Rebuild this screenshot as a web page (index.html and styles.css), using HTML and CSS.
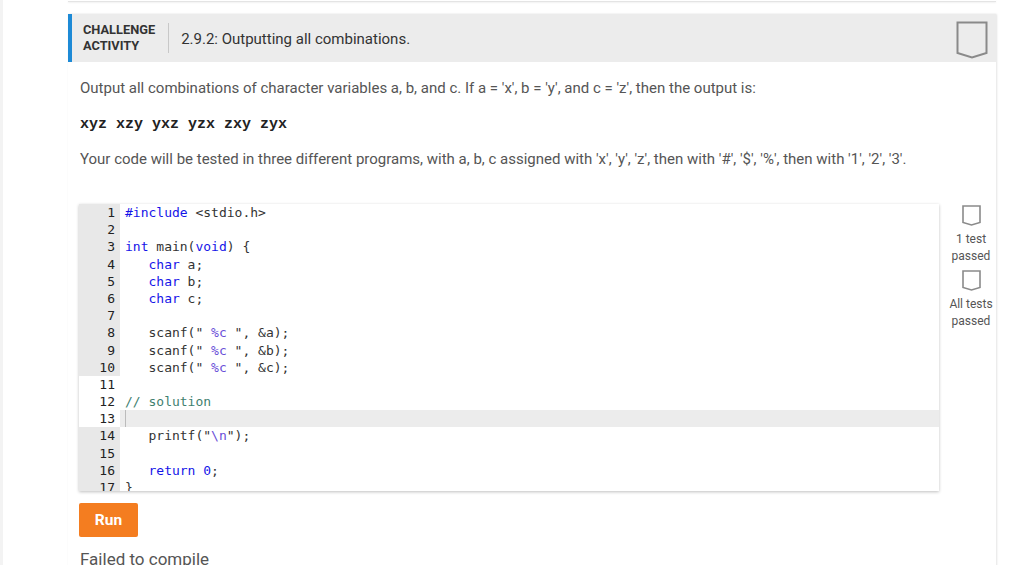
FILE: index.html
```html
<!DOCTYPE html>
<html>
<head>
<meta charset="utf-8">
<link rel="stylesheet" href="styles.css">
</head>
<body>
<div class="page">
  <div class="prev-card"></div>
  <div class="card">
    <div class="card-header">
      <div class="label">CHALLENGE<br>ACTIVITY</div>
      <div class="divider"></div>
      <div class="title">2.9.2: Outputting all combinations.</div>
      <svg class="badge" width="32" height="38" viewBox="0 0 32 38"><path d="M1.5 1.5 H30.5 V32 L16 36.5 L1.5 32 Z" fill="none" stroke="#8a8a8a" stroke-width="2"/></svg>
    </div>
    <div class="card-body">
      <p class="text">Output all combinations of character variables a, b, and c. If a = 'x', b = 'y', and c = 'z', then the output is:</p>
      <p class="mono">xyz xzy yxz yzx zxy zyx</p>
      <p class="text">Your code will be tested in three different programs, with a, b, c assigned with 'x', 'y', 'z', then with '#', '$', '%', then with '1', '2', '3'.</p>
      <div class="work">
        <div class="editor">
          <div class="line"><span class="gut">1</span><span class="code"><span class="kw">#include</span> &lt;stdio.h&gt;</span></div>
          <div class="line"><span class="gut">2</span><span class="code"></span></div>
          <div class="line"><span class="gut">3</span><span class="code"><span class="kw">int</span> main(<span class="kw">void</span>) {</span></div>
          <div class="line"><span class="gut">4</span><span class="code">   <span class="kw">char</span> a;</span></div>
          <div class="line"><span class="gut">5</span><span class="code">   <span class="kw">char</span> b;</span></div>
          <div class="line"><span class="gut">6</span><span class="code">   <span class="kw">char</span> c;</span></div>
          <div class="line"><span class="gut">7</span><span class="code"></span></div>
          <div class="line"><span class="gut">8</span><span class="code">   scanf(" <span class="esc">%c</span> ", &amp;a);</span></div>
          <div class="line"><span class="gut">9</span><span class="code">   scanf(" <span class="esc">%c</span> ", &amp;b);</span></div>
          <div class="line"><span class="gut">10</span><span class="code">   scanf(" <span class="esc">%c</span> ", &amp;c);</span></div>
          <div class="line"><span class="gut white">11</span><span class="code"></span></div>
          <div class="line"><span class="gut white">12</span><span class="code"><span class="cm">// solution</span></span></div>
          <div class="line active"><span class="gut white">13</span><span class="code"><span class="cursor"></span></span></div>
          <div class="line"><span class="gut">14</span><span class="code">   printf("<span class="esc">\n</span>");</span></div>
          <div class="line"><span class="gut">15</span><span class="code"></span></div>
          <div class="line"><span class="gut">16</span><span class="code">   <span class="kw">return</span> <span class="kw">0</span>;</span></div>
          <div class="line"><span class="gut">17</span><span class="code">}</span></div>
        </div>
        <div class="tests">
          <svg class="tbadge" width="19" height="21" viewBox="0 0 19 21"><path d="M1 1 H18 V17.5 L9.5 20 L1 17.5 Z" fill="none" stroke="#8a8a8a" stroke-width="1.6"/></svg>
          <div class="tlabel">1 test<br>passed</div>
          <svg class="tbadge" width="19" height="21" viewBox="0 0 19 21"><path d="M1 1 H18 V17.5 L9.5 20 L1 17.5 Z" fill="none" stroke="#8a8a8a" stroke-width="1.6"/></svg>
          <div class="tlabel">All tests<br>passed</div>
        </div>
      </div>
      <button class="run">Run</button>
      <div class="status">Failed to compile</div>
    </div>
  </div>
</div>
</body>
</html>
```
FILE: styles.css
```css
html, body { margin: 0; padding: 0; background: #fff; }
body { font-family: Roboto, "Liberation Sans", sans-serif; color: #555; overflow: hidden; height: 565px; }
.page { padding-left: 68px; border-left: 3px solid #f3f3f3; margin-left: 0; }
.prev-card { width: 928px; margin-left: -3px; height: 1px; border-bottom: 1px solid #e4e4e4; box-shadow: 0 1px 2px rgba(0,0,0,0.06); }
.card { width: 928px; margin-left: -3px; margin-top: 12px; background: #fff; box-shadow: 1px 0 2px rgba(0,0,0,0.10), 0 0 1px rgba(0,0,0,0.05); }
.card-header { height: 48px; background: #ececec; border-left: 4px solid #1d8ad6; display: flex; align-items: center; padding-left: 11px; padding-right: 8px; }
.label { font-size: 12.8px; font-weight: bold; line-height: 16px; color: #333; margin-top: 0px; }
.divider { width: 1px; height: 30px; background: #c8c8c8; margin-left: 13px; margin-right: 12px; }
.title { font-size: 15px; color: #333; flex: 1; margin-top: 1px; }
.badge { display: block; margin-top: 4px; }
.card-body { padding: 0 57px 20px 12px; }
.text { margin: 0; font-size: 15px; line-height: 20px; color: #555; }
.card-body .text:first-child { padding-top: 16px; }
.mono { margin: 0; padding-top: 17px; padding-bottom: 14px; font-family: "Liberation Mono", "Courier New", monospace; font-weight: bold; font-size: 15px; line-height: 20px; color: #222; word-spacing: 0; }
.work { display: flex; margin-top: 35px; margin-left: -1px; }
.editor { width: 860px; height: 287px; overflow: hidden; background: #fff; box-shadow: 0 1px 3px rgba(0,0,0,0.25); font-family: "DejaVu Sans Mono", monospace; font-size: 13px; color: #333; }
.line { display: flex; height: 17.2px; line-height: 17.2px; }
.gut { width: 36px; padding-right: 5px; flex: none; background: #e8e8e8; text-align: right; color: #222; }
.gut.white { background: #fff; }
.code { white-space: pre; padding-left: 5px; flex: 1; }
.line.active .code { background: #ececec; }
.cursor { display: inline-block; width: 1px; height: 17px; background: #bbb; vertical-align: top; }
.kw { color: #1515e8; }
.esc { color: #6a4fd8; }
.cm { color: #3f7f6f; }
.tests { width: 50px; margin-right: -57px; padding-left: 7px; display: flex; flex-direction: column; align-items: center; padding-top: 1px; }
.tbadge { display: block; }
.tlabel { font-size: 12px; line-height: 17px; color: #555; text-align: center; margin-top: 5px; margin-bottom: 5px; }
.run { display: block; margin-top: 12px; margin-left: -1px; width: 59px; height: 34px; border: none; border-radius: 2px; background: #f47d20; color: #fff; font-family: Roboto, "Liberation Sans", sans-serif; font-weight: bold; font-size: 15.5px; padding: 0; }
.status { margin-top: 12px; font-size: 17px; color: #555; }
```
